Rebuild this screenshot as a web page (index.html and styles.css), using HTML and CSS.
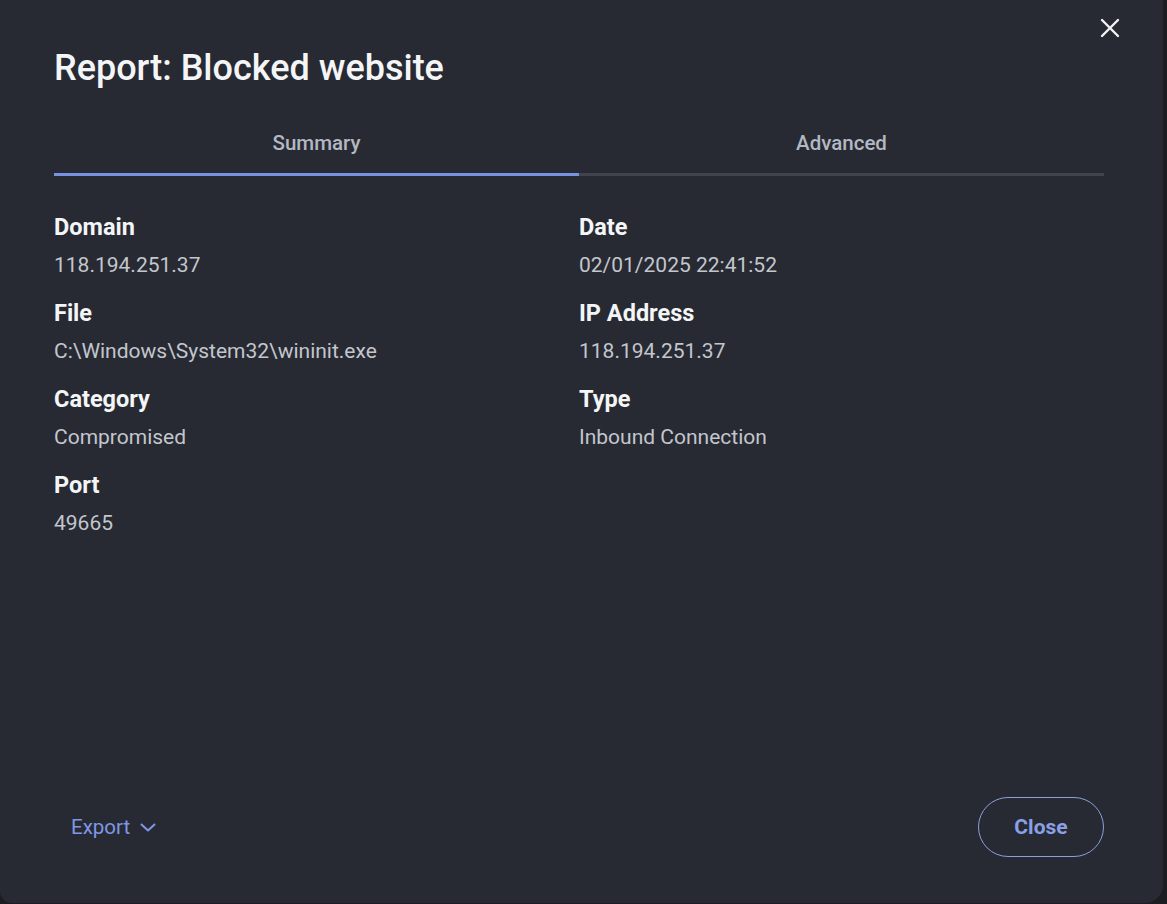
FILE: index.html
```html
<html lang="en">
<head>
    <meta charset="UTF-8">
    <meta name="viewport" content="width=device-width, initial-scale=1.0">
    <title>Report: Blocked website</title>
    <link rel="stylesheet" href="styles.css">
</head>
<body>
    <div class="dialog">
        <button class="close-x" aria-label="Close">
            <svg width="20" height="20" viewBox="0 0 20 20">
                <path d="M2 2 L18 18 M18 2 L2 18" stroke="#f2f3f5" stroke-width="2.4" stroke-linecap="round"/>
            </svg>
        </button>

        <h1 class="title">Report: Blocked website</h1>

        <div class="tabs">
            <div class="tab active">Summary</div>
            <div class="tab">Advanced</div>
        </div>

        <div class="details">
            <div class="field">
                <div class="label">Domain</div>
                <div class="value">118.194.251.37</div>
            </div>
            <div class="field">
                <div class="label">Date</div>
                <div class="value">02/01/2025 22:41:52</div>
            </div>
            <div class="field">
                <div class="label">File</div>
                <div class="value">C:\Windows\System32\wininit.exe</div>
            </div>
            <div class="field">
                <div class="label">IP Address</div>
                <div class="value">118.194.251.37</div>
            </div>
            <div class="field">
                <div class="label">Category</div>
                <div class="value">Compromised</div>
            </div>
            <div class="field">
                <div class="label">Type</div>
                <div class="value">Inbound Connection</div>
            </div>
            <div class="field">
                <div class="label">Port</div>
                <div class="value">49665</div>
            </div>
        </div>

        <div class="footer">
            <button class="export-button">
                Export
                <svg width="16" height="9" viewBox="0 0 16 9">
                    <path d="M1.5 1.5 L8 7.5 L14.5 1.5" fill="none" stroke="#7f98e6" stroke-width="2" stroke-linecap="round" stroke-linejoin="round"/>
                </svg>
            </button>
            <button class="close-button">Close</button>
        </div>
    </div>
</body>
</html>
```

FILE: styles.css
```css
body {
    margin: 0;
    background-color: #1b1d22;
    font-family: Roboto, "Liberation Sans", Arial, sans-serif;
}
.dialog {
    position: relative;
    box-sizing: border-box;
    width: 1163px;
    height: 903px;
    background-color: #272a32;
    border-radius: 0 0 18px 12px;
    padding: 48px 59px 46px 54px;
    display: flex;
    flex-direction: column;
}
.close-x {
    position: absolute;
    top: 18px;
    right: 43px;
    width: 20px;
    height: 20px;
    padding: 0;
    border: none;
    background: none;
    cursor: pointer;
}
.title {
    margin: 0;
    font-size: 36px;
    line-height: 40px;
    font-weight: 500;
    color: #f4f5f7;
}
.tabs {
    display: flex;
    margin-top: 43px;
}
.tab {
    flex: 1;
    text-align: center;
    font-size: 20.5px;
    line-height: 24px;
    font-weight: 500;
    color: #b4b8c2;
    padding-bottom: 18px;
    border-bottom: 3px solid #41444f;
}
.tab.active {
    border-bottom-color: #7a90e0;
}
.details {
    flex: 1;
    display: grid;
    grid-template-columns: 1fr 1fr;
    align-content: start;
    row-gap: 22px;
    margin-top: 37px;
}
.field {
    display: flex;
    flex-direction: column;
    gap: 12px;
}
.label {
    font-size: 23.5px;
    line-height: 28px;
    font-weight: 700;
    color: #f4f5f7;
}
.value {
    font-size: 21px;
    line-height: 24px;
    color: #c3c6cd;
}
.footer {
    display: flex;
    justify-content: space-between;
    align-items: center;
}
.export-button {
    display: flex;
    align-items: center;
    gap: 10px;
    padding: 0 17px;
    border: none;
    background: none;
    font-family: inherit;
    font-size: 20.5px;
    color: #7f98e6;
    cursor: pointer;
}
.close-button {
    width: 126px;
    height: 60px;
    border: 1.5px solid #8d9fd9;
    border-radius: 30px;
    background: none;
    font-family: inherit;
    font-size: 21px;
    font-weight: 700;
    color: #8aa0e6;
    cursor: pointer;
}
```
